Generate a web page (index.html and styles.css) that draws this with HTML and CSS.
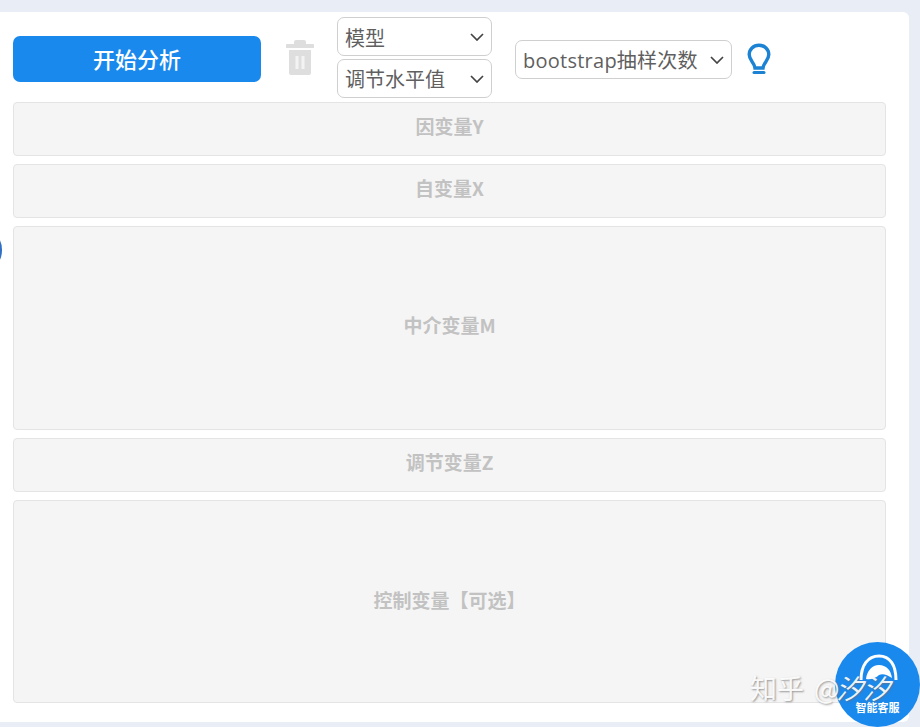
FILE: index.html
```html
<!DOCTYPE html>
<html lang="zh">
<head>
<meta charset="utf-8">
<title>分析</title>
<link rel="stylesheet" href="styles.css">
</head>
<body>
<main class="card">
  <div class="toolbar">
    <button class="start">开始分析</button>
    <svg class="trash" width="28" height="35" viewBox="0 0 28 35"><path d="M10 0h8a2 2 0 0 1 2 2v2h7a1 1 0 0 1 1 1v3H0V5a1 1 0 0 1 1-1h7V2a2 2 0 0 1 2-2z" fill="#dedede"/><path d="M3 10h22v23a2 2 0 0 1-2 2H5a2 2 0 0 1-2-2z" fill="#dedede"/><path d="M9.500 16v13h3V16zM15.500 16v13h3V16z" fill="#f3f3f3"/></svg>
    <div class="stack">
      <div class="select wide"><span class="label">模型</span><svg class="chev" width="14" height="8" viewBox="0 0 14 8"><path d="M1 1l6 6 6-6" fill="none" stroke="#444" stroke-width="1.7"/></svg></div>
      <div class="select wide"><span>调节水平值</span><svg class="chev" width="14" height="8" viewBox="0 0 14 8"><path d="M1 1l6 6 6-6" fill="none" stroke="#444" stroke-width="1.7"/></svg></div>
    </div>
    <div class="select boot"><span>bootstrap抽样次数</span><svg class="chev" width="14" height="8" viewBox="0 0 14 8"><path d="M1 1l6 6 6-6" fill="none" stroke="#444" stroke-width="1.7"/></svg></div>
    <svg class="bulb" width="24" height="33" viewBox="0 0 24 33"><path d="M12 2.200C6.300 2.200 2.200 6.500 2.200 11.600c0 6 5.200 7.800 5.800 13.400h8c.6-5.600 5.800-7.400 5.800-13.400C21.800 6.500 17.700 2.200 12 2.200z" fill="none" stroke="#1c82d4" stroke-width="3.400"/><path d="M7 29.500h10" stroke="#1c82d4" stroke-width="3" stroke-linecap="round"/></svg>
  </div>
  <div class="zones">
    <div class="zone short">因变量Y</div>
    <div class="zone short">自变量X</div>
    <div class="zone tall">中介变量M</div>
    <div class="zone short">调节变量Z</div>
    <div class="zone tall last">控制变量【可选】</div>
  </div>
</main>
<div class="side-dot"></div>
<div class="service">
  <svg class="agent" width="44" height="40" viewBox="0 0 44 40"><path d="M5 27C5 12 12 3 23 3s17 9 17 24" fill="none" stroke="#fff" stroke-width="3"/><path d="M10 26c1-8 6-14 13-14 7 0 12 5 13 13-5-3-9-5-13-3-3 3-8 5-13 4z" fill="#fff"/></svg>
  <span class="service-label">智能客服</span>
</div>
<div class="watermark">知乎 <span class="at">@</span><span class="hand">汐汐</span></div>
</body>
</html>
```
FILE: styles.css
```css
* { box-sizing: border-box; }
html, body { margin: 0; height: 100%; }
body {
  width: 920px;
  height: 727px;
  overflow: hidden;
  background: #e9edf5;
  padding: 12px 11px 5px 0;
  font-family: "Noto Sans CJK SC", "Liberation Sans", sans-serif;
  position: relative;
}
.card {
  background: #fff;
  height: 710px;
  border-radius: 0 6px 6px 0;
  padding: 5px 23px 0 13px;
}
.toolbar {
  display: flex;
  align-items: center;
  height: 81px;
}
.start {
  width: 248px;
  height: 46px;
  margin-top: 2px;
  border: 0;
  border-radius: 7px;
  background: #1a89ee;
  color: #fff;
  font: 500 22px "Noto Sans CJK SC", sans-serif;
  padding: 0 0 2px;
}
.trash { margin: 0 23px 0 25px; }
.stack { display: flex; flex-direction: column; gap: 3px; }
.select {
  height: 39px;
  border: 1px solid #cfcfcf;
  border-radius: 7px;
  background: #fff;
  color: #5f5f5f;
  font-size: 20px;
  display: flex;
  align-items: center;
  justify-content: space-between;
  padding: 0 7px;
}
.label { padding-top: 2px; }
.wide { width: 155px; }
.boot {
  width: 217px;
  margin: 4px 0 0 23px;
  font-family: "Open Sans", "Noto Sans CJK SC", sans-serif;
  font-size: 20px;
  letter-spacing: 0.25px;
}
.chev { flex: none; }
.bulb { margin: 4px 0 0 15px; }
.zones {
  display: flex;
  flex-direction: column;
  gap: 8px;
  margin-top: 4px;
}
.zone {
  background: #f5f5f5;
  border: 1px solid #e4e4e4;
  border-radius: 4px;
  color: #c2c2c2;
  font-size: 19px;
  font-weight: 700;
  display: flex;
  align-items: center;
  justify-content: center;
  padding-bottom: 7px;
}
.short { height: 54px; }
.tall { height: 204px; }
.last { height: 203px; padding-bottom: 4px; }
.side-dot {
  position: absolute;
  left: -15px;
  top: 235px;
  width: 17px;
  height: 30px;
  border-radius: 50%;
  background: #2f6fc4;
}
.watermark {
  position: absolute;
  left: 750px;
  top: 675px;
  color: rgba(255, 255, 255, 0.92);
  font-size: 27px;
  line-height: 26px;
  white-space: nowrap;
  text-shadow: 1px 1px 2px rgba(110, 110, 110, 0.7);
}
.at { margin-left: 4px; }
.hand {
  display: inline-block;
  transform: skewX(-14deg);
  margin-left: -1px;
}
.service {
  position: absolute;
  left: 835px;
  top: 642px;
  width: 85px;
  height: 85px;
  border-radius: 50%;
  background: #1a89ee;
  color: #fff;
  display: flex;
  flex-direction: column;
  align-items: center;
}
.agent { margin-top: 11px; }
.service-label {
  font-size: 11px;
  font-weight: 700;
  line-height: 12px;
  margin-top: 8px;
}
```
